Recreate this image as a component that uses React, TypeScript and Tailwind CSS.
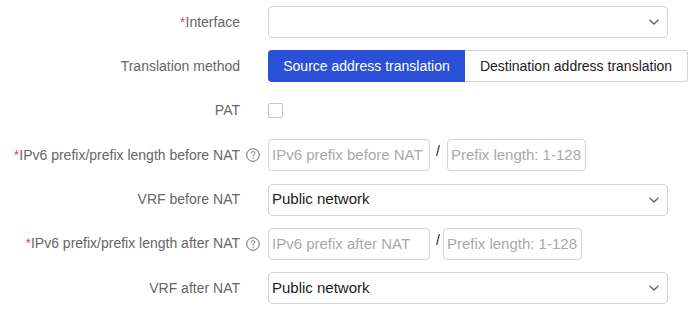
import React from "react";

const font = { fontFamily: '"Liberation Sans", Arial, sans-serif' };

function Help() {
  return (
    <svg width="14" height="14" viewBox="0 0 14 14" className="ml-[6px] shrink-0">
      <circle cx="7" cy="7" r="6.3" fill="none" stroke="#6a6a6a" strokeWidth="1" />
      <path d="M5.1 5.4 C5.1 4.2 6 3.6 7 3.6 C8.1 3.6 8.9 4.3 8.9 5.2 C8.9 6.3 7.6 6.5 7.1 7.3 L7.1 8.3" fill="none" stroke="#6a6a6a" strokeWidth="1" />
      <circle cx="7.1" cy="10.2" r="0.65" fill="#6a6a6a" />
    </svg>
  );
}

function Chevron() {
  return (
    <svg width="12" height="8" viewBox="0 0 12 8" className="shrink-0">
      <path d="M1.5 1.8 L6 6 L10.5 1.8" fill="none" stroke="#5b6577" strokeWidth="1.3" />
    </svg>
  );
}

function Label({ text, req, help }: { text: string; req?: boolean; help?: boolean }) {
  return (
    <div className="flex w-[268px] shrink-0 items-center">
      <div className="w-[240px] whitespace-nowrap text-right text-[14px] text-[#666]">
        {req && <span className="text-[#e0516a]">*</span>}
        {text}
      </div>
      {help && <Help />}
    </div>
  );
}

function Select({ value }: { value?: string }) {
  return (
    <div className="flex h-[32px] w-[400px] items-center justify-between rounded-[4px] border border-[#d4d4d4] bg-white pl-[3px] pr-[7px]">
      <span className="text-[15px] text-[#1a1a1a]">{value ?? ""}</span>
      <Chevron />
    </div>
  );
}

function Input({ ph, w }: { ph: string; w: string }) {
  return (
    <div className={`flex h-[32px] items-center rounded-[4px] border border-[#d4d4d4] bg-white pl-[3px] ${w}`}>
      <span className="whitespace-nowrap text-[15px] text-[#a9a9a9]">{ph}</span>
    </div>
  );
}

export default function App() {
  return (
    <div className="flex h-[312px] w-[694px] flex-col gap-[12.4px] bg-white pt-[6px]" style={font}>
      <div className="flex h-[32px] items-center">
        <Label text="Interface" req />
        <Select />
      </div>
      <div className="flex h-[32px] items-center">
        <Label text="Translation method" />
        <div className="flex h-[32px]">
          <div className="flex w-[197px] items-center justify-center rounded-l-[4px] bg-[#2b50d8] text-[14px] text-white">
            Source address translation
          </div>
          <div className="flex w-[223px] items-center justify-center rounded-r-[4px] border border-l-0 border-[#d4d4d4] text-[14px] text-[#222]">
            Destination address translation
          </div>
        </div>
      </div>
      <div className="flex h-[32px] items-center">
        <Label text="PAT" />
        <div className="mb-[1px] h-[15px] w-[15px] rounded-[2px] border border-[#c4c4c4] bg-white" />
      </div>
      <div className="flex h-[32px] items-center">
        <Label text="IPv6 prefix/prefix length before NAT" req help />
        <Input ph="IPv6 prefix before NAT" w="w-[162px]" />
        <span className="ml-[6px] mr-[7px] self-start pt-[2px] text-[14px] leading-[20px] text-[#222]">/</span>
        <Input ph="Prefix length: 1-128" w="w-[139px]" />
      </div>
      <div className="flex h-[32px] items-center">
        <Label text="VRF before NAT" />
        <Select value="Public network" />
      </div>
      <div className="flex h-[32px] items-center">
        <Label text="IPv6 prefix/prefix length after NAT" req help />
        <Input ph="IPv6 prefix after NAT" w="w-[162px]" />
        <span className="ml-[6px] mr-[3px] self-start pt-[2px] text-[14px] leading-[20px] text-[#222]">/</span>
        <Input ph="Prefix length: 1-128" w="w-[139px]" />
      </div>
      <div className="flex h-[32px] items-center">
        <Label text="VRF after NAT" />
        <Select value="Public network" />
      </div>
    </div>
  );
}
